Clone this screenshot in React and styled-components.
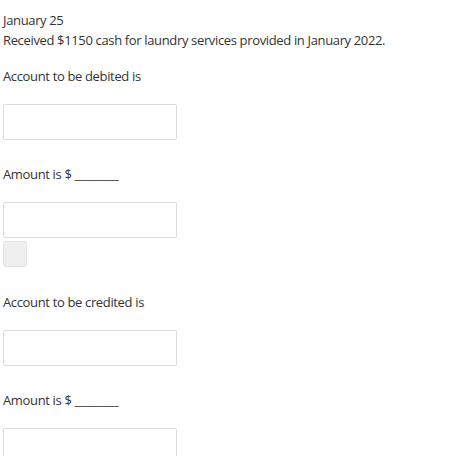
import React from "react";
import styled, { createGlobalStyle } from "styled-components";

const Global = createGlobalStyle`
  html, body { margin: 0; padding: 0; background: #fff; }
  body { font-family: "Open Sans", "Noto Sans", Arial, sans-serif; }
`;

const Page = styled.div`
  padding: 10px 3px 0 3px;
  color: #333;
  font-size: 13px;
  letter-spacing: -0.35px;
  line-height: 20px;
`;

const Line = styled.div`
  white-space: nowrap;
`;

const Label = styled.div`
  margin-top: ${(p) => p.$top || 24}px;
  white-space: nowrap;
`;

const Blank = styled.span`
  letter-spacing: -0.2px;
`;

const Box = styled.div`
  margin-top: 18px;
  width: 172px;
  height: 34px;
  border: 1px solid #dcdcdc;
  border-radius: 2px;
  background: #fff;
`;

const Check = styled.div`
  margin-top: 3px;
  width: 22px;
  height: 24px;
  border: 1px solid #e2e2e2;
  border-radius: 3px;
  background: #efefef;
`;

export default function App() {
  return (
    <>
      <Global />
      <Page>
        <Line>January 25</Line>
        <Line>Received $1150 cash for laundry services provided in January 2022.</Line>
        <Label $top={16}>Account to be debited is</Label>
        <Box />
        <Label>Amount is $ <Blank>________</Blank></Label>
        <Box />
        <Check />
        <Label $top={25}>Account to be credited is</Label>
        <Box />
        <Label>Amount is $ <Blank>________</Blank></Label>
        <Box />
      </Page>
    </>
  );
}
